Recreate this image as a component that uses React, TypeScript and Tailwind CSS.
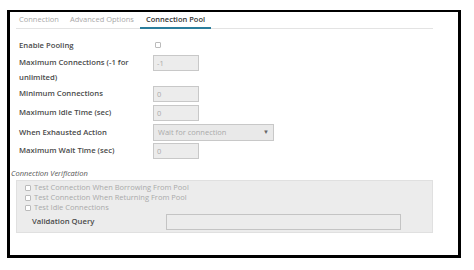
const FIELDS = [
  { label: "Minimum Connections", value: "0" },
  { label: "Maximum Idle Time (sec)", value: "0" },
];

const CHECKS = [
  "Test Connection When Borrowing From Pool",
  "Test Connection When Returning From Pool",
  "Test Idle Connections",
];

function Box({ value, width = "w-[46px]" }: { value: string; width?: string }) {
  return (
    <div
      className={`${width} h-[16px] border border-[#c8c8c8] bg-[#ececec] px-[3px] text-[7.5px] font-normal leading-[14px] text-[#aaa]`}
    >
      {value}
    </div>
  );
}

function Check() {
  return <span className="inline-block w-[6px] h-[6px] border border-[#bbb] rounded-[1px] bg-white" />;
}

export default function App() {
  return (
    <div
      className="w-[474px] h-[270px] bg-white pt-[10px] pl-[7px]"
      style={{ fontFamily: '"Open Sans", "Liberation Sans", sans-serif' }}
    >
      <div className="w-[454px] h-[248px] border-[3px] border-t-2 border-black pl-[6px] pr-[25px]">
        {/* Tabs */}
        <div className="flex items-end h-[17px] border-b border-[#e3e3e3] text-[7.5px]">
          <div className="w-[51px] pl-[3px] pb-[3px] text-[#a8a8a8]">Connection</div>
          <div className="w-[73px] pl-[3px] pb-[3px] text-[#a8a8a8]">Advanced Options</div>
          <div className="px-[6px] pb-[2px] -mb-px border-b-2 border-[#2a7d9c] font-semibold text-[#333]">
            Connection Pool
          </div>
        </div>

        {/* Form */}
        <div className="flex flex-col pl-[3px] pt-[8px] text-[7.7px] font-semibold text-[#4a4a4a]">
          <div className="flex items-center h-[17px]">
            <div className="w-[134px]">Enable Pooling</div>
            <span className="ml-[2px]"><Check /></span>
          </div>
          <div className="flex items-start mt-[1px] h-[31px]">
            <div className="w-[134px] leading-[15px]">
              Maximum Connections (-1 for
              <br />
              unlimited)
            </div>
            <Box value="-1" />
          </div>
          {FIELDS.map((f) => (
            <div key={f.label} className="flex items-center h-[16px] mb-[3px]">
              <div className="w-[134px]">{f.label}</div>
              <Box value={f.value} />
            </div>
          ))}
          <div className="flex items-center h-[17px] mb-[2px]">
            <div className="w-[134px]">When Exhausted Action</div>
            <div className="w-[121px] h-[17px] border border-[#c8c8c8] bg-[#e9e9e9] px-[4px] flex items-center justify-between text-[7.5px] font-normal text-[#aaa]">
              <span>Wait for connection</span>
              <span className="text-[6px] text-[#666]">▼</span>
            </div>
          </div>
          <div className="flex items-center h-[16px]">
            <div className="w-[134px]">Maximum Wait Time (sec)</div>
            <Box value="0" />
          </div>
        </div>

        {/* Verification */}
        <div className="-ml-[5px] mt-[9px] text-[7.5px] italic text-[#555] leading-[10px]">Connection Verification</div>
        <div className="mt-[2px] h-[53px] bg-[#ececec] border border-[#e0e0e0] pl-[8px] pt-[2px] text-[7.5px] text-[#aaa]">
          {CHECKS.map((c) => (
            <div key={c} className="flex items-center gap-[3px] h-[10px]">
              <Check />
              <span>{c}</span>
            </div>
          ))}
          <div className="flex items-center mt-[1px] h-[16px]">
            <div className="w-[141px] pl-[7px] text-[7.7px] font-semibold text-[#4a4a4a]">Validation Query</div>
            <div className="w-[235px] h-[16px] border border-[#c4c4c4] bg-[#ececec]" />
          </div>
        </div>
      </div>
    </div>
  );
}
